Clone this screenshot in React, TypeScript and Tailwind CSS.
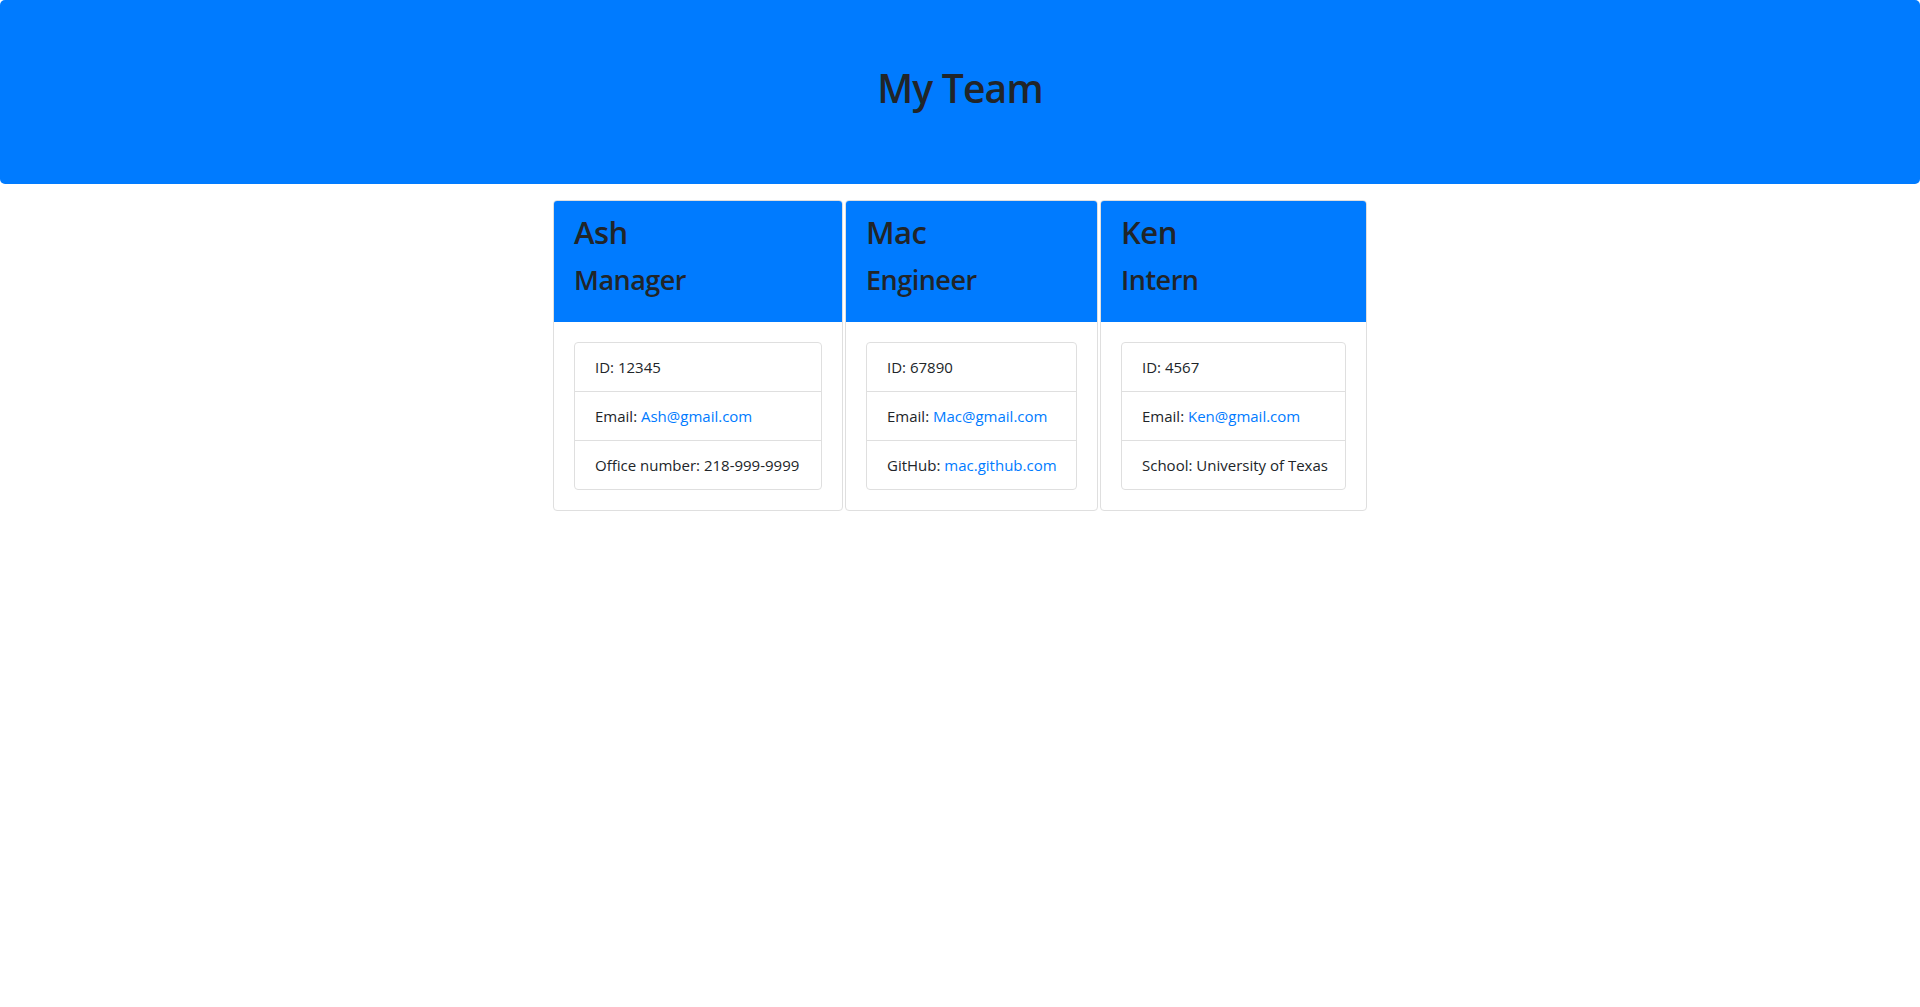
const team = [
  {
    name: "Ash",
    role: "Manager",
    width: "w-[290px]",
    rows: [
      { label: "ID:", value: "12345" },
      { label: "Email:", value: "Ash@gmail.com", link: true },
      { label: "Office number:", value: "218-999-9999" },
    ],
  },
  {
    name: "Mac",
    role: "Engineer",
    width: "w-[253px]",
    rows: [
      { label: "ID:", value: "67890" },
      { label: "Email:", value: "Mac@gmail.com", link: true },
      { label: "GitHub:", value: "mac.github.com", link: true },
    ],
  },
  {
    name: "Ken",
    role: "Intern",
    width: "w-[267px]",
    rows: [
      { label: "ID:", value: "4567" },
      { label: "Email:", value: "Ken@gmail.com", link: true },
      { label: "School:", value: "University of Texas" },
    ],
  },
];

export default function App() {
  return (
    <div className="min-h-screen bg-white text-[#212529] font-['Segoe_UI','Open_Sans',sans-serif]">
      {/* Jumbotron */}
      <div className="rounded-[5px] bg-[#007bff] px-8 pt-16 pb-16">
        <h1 className="mb-2 text-center text-[39px] font-semibold leading-[48px] tracking-[-0.8px]">My Team</h1>
      </div>

      {/* Cards */}
      <div className="mt-4 flex justify-center gap-[2px]">
        {team.map((m) => (
          <div
            key={m.name}
            className={`${m.width} flex flex-col overflow-hidden rounded-[4px] border border-[#dfdfdf] bg-white`}
          >
            <div className="bg-[#007bff] px-5 pt-3 pb-[25px]">
              <h2 className="mb-3 text-[31px] font-semibold leading-[38px] tracking-[-0.5px]">{m.name}</h2>
              <h3 className="text-[27px] font-semibold leading-[34px] tracking-[-0.5px]">{m.role}</h3>
            </div>
            <div className="p-5">
              <ul className="rounded-[4px] border border-[#dfdfdf]">
                {m.rows.map((r, i) => (
                  <li
                    key={r.label}
                    className={`px-5 py-3 text-[15px] leading-6 whitespace-nowrap ${i > 0 ? "border-t border-[#dfdfdf]" : ""}`}
                  >
                    {r.label}{" "}
                    {r.link ? <a className="text-[#007bff]">{r.value}</a> : r.value}
                  </li>
                ))}
              </ul>
            </div>
          </div>
        ))}
      </div>
    </div>
  );
}
